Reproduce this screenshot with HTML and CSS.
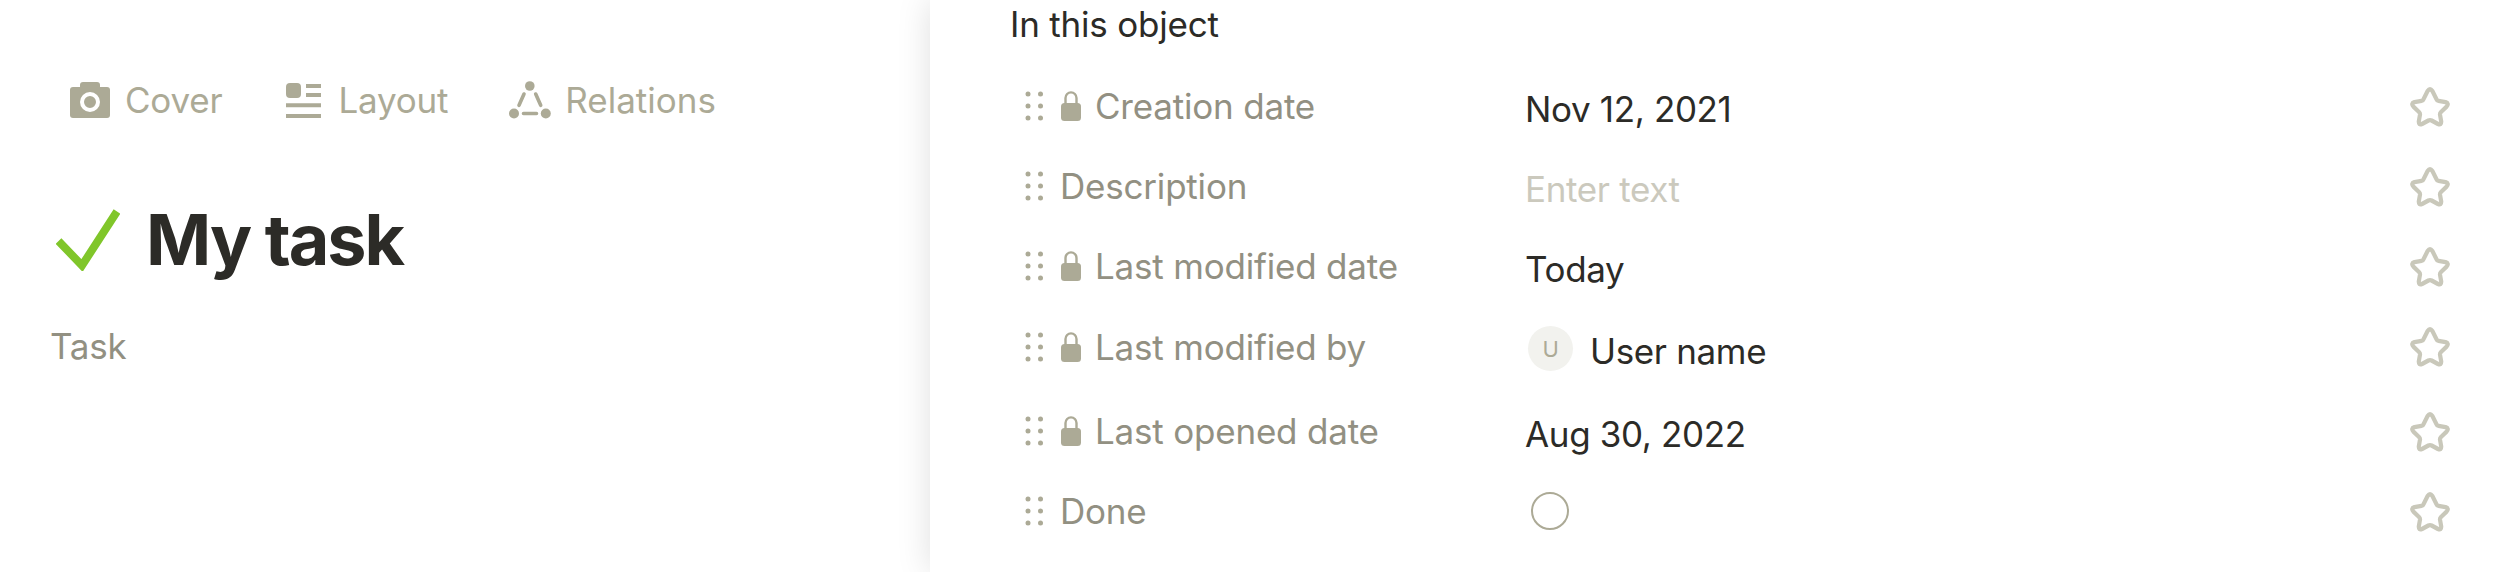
FILE: index.html
```html
<!DOCTYPE html>
<html lang="en">
<head>
<meta charset="utf-8">
<title>My task</title>
<link rel="stylesheet" href="styles.css">
</head>
<body>
<main class="page">
  <section class="object">
    <div class="toolbar">
      <div class="tool tool-cover">
        <svg class="ico-cover" viewBox="0 0 40 36"><rect x="10" y="0" width="20" height="10" rx="3" fill="#acaa96"/><rect x="0" y="5" width="40" height="31" rx="3" fill="#acaa96"/><circle cx="20" cy="20" r="8" fill="#acaa96" stroke="#fff" stroke-width="4"/></svg>
        <span>Cover</span>
      </div>
      <div class="tool tool-layout">
        <svg class="ico-layout" viewBox="0 0 35 35"><rect x="0" y="0" width="15" height="15" rx="4" fill="#acaa96"/><path d="M20 3H35M20 12H35M0 22.2H35M0 33H35" stroke="#acaa96" stroke-width="4" fill="none"/></svg>
        <span>Layout</span>
      </div>
      <div class="tool tool-relations">
        <svg class="ico-rel" viewBox="0 0 42 38"><circle cx="20.8" cy="5" r="4.8" fill="#acaa96"/><circle cx="5" cy="32.5" r="5" fill="#acaa96"/><circle cx="36.8" cy="32.5" r="5" fill="#acaa96"/><path d="M15 13L10 24.3M26.7 13L31.7 24.3M14.5 32.5H27.5" stroke="#acaa96" stroke-width="3.6" stroke-linecap="round" fill="none"/></svg>
        <span>Relations</span>
      </div>
    </div>
    <div class="heading">
      <svg class="ico-check" viewBox="0 0 64 62"><path d="M2.5 32L26 56.5L61 2.5" stroke="#80c62a" stroke-width="8" fill="none" stroke-linejoin="miter"/></svg>
      <h1>My task</h1>
    </div>
    <p class="type">Task</p>
  </section>
  <section class="panel">
    <h2>In this object</h2>
    <div class="rows">
      <div class="row">
        <div class="name"><svg class="grip" viewBox="0 0 18 30"><use href="#dots"/></svg><svg class="lock" viewBox="0 0 20 30"><use href="#lockshape"/></svg><span>Creation date</span></div>
        <div class="value">Nov 12, 2021</div>
        <svg class="star" viewBox="0 0 40 40"><use href="#starshape"/></svg>
      </div>
      <div class="row">
        <div class="name"><svg class="grip" viewBox="0 0 18 30"><use href="#dots"/></svg><span>Description</span></div>
        <div class="value placeholder">Enter text</div>
        <svg class="star" viewBox="0 0 40 40"><use href="#starshape"/></svg>
      </div>
      <div class="row">
        <div class="name"><svg class="grip" viewBox="0 0 18 30"><use href="#dots"/></svg><svg class="lock" viewBox="0 0 20 30"><use href="#lockshape"/></svg><span>Last modified date</span></div>
        <div class="value">Today</div>
        <svg class="star" viewBox="0 0 40 40"><use href="#starshape"/></svg>
      </div>
      <div class="row row-user">
        <div class="name name-user"><svg class="grip" viewBox="0 0 18 30"><use href="#dots"/></svg><svg class="lock" viewBox="0 0 20 30"><use href="#lockshape"/></svg><span>Last modified by</span></div>
        <div class="value user"><span class="avatar">U</span><span>User name</span></div>
        <svg class="star star-user" viewBox="0 0 40 40"><use href="#starshape"/></svg>
      </div>
      <div class="row">
        <div class="name"><svg class="grip" viewBox="0 0 18 30"><use href="#dots"/></svg><svg class="lock" viewBox="0 0 20 30"><use href="#lockshape"/></svg><span>Last opened date</span></div>
        <div class="value">Aug 30, 2022</div>
        <svg class="star" viewBox="0 0 40 40"><use href="#starshape"/></svg>
      </div>
      <div class="row">
        <div class="name"><svg class="grip" viewBox="0 0 18 30"><use href="#dots"/></svg><span>Done</span></div>
        <div class="value"><span class="checkbox"></span></div>
        <svg class="star" viewBox="0 0 40 40"><use href="#starshape"/></svg>
      </div>
    </div>
  </section>
</main>
<svg class="defs" width="0" height="0" aria-hidden="true">
  <defs>
    <g id="dots" fill="#acaa96"><circle cx="3" cy="3" r="2.5"/><circle cx="15.5" cy="3" r="2.5"/><circle cx="3" cy="15" r="2.5"/><circle cx="15.5" cy="15" r="2.5"/><circle cx="3" cy="27" r="2.5"/><circle cx="15.5" cy="27" r="2.5"/></g>
    <g id="lockshape"><path d="M4.5 14V6.9a5.5 5.5 0 0 1 11 0V14" stroke="#acaa96" stroke-width="2.4" fill="none"/><rect x="0" y="12" width="20" height="18" rx="3.5" fill="#acaa96"/></g>
    <path id="starshape" transform="translate(0 -0.4) scale(1 1.04)" d="M17.6 4.2Q20 0.8 22.4 4.2L26.5 12.2Q27 13.6 28.5 13.8L35.6 15Q39.4 16.2 36.6 19.2L31 24.4Q29.8 25.6 30 27L31.2 33.4Q31.4 37.4 28 36L21.6 32.6Q20 31.8 18.4 32.6L12 36Q8.6 37.4 8.8 33.4L10 27Q10.2 25.6 9 24.4L3.4 19.2Q0.6 16.2 4.4 15L11.5 13.8Q13 13.6 13.5 12.2Z" fill="none" stroke="#c9c8ba" stroke-width="4.2" stroke-linejoin="round"/>
  </defs>
</svg>
</body>
</html>
```
FILE: styles.css
```css
* { box-sizing: border-box; }
html, body { margin: 0; height: 100%; background: #fff; overflow: hidden; }
body { font-family: Inter, "Liberation Sans", sans-serif; font-size: 35px; letter-spacing: -0.2px; color: #2c2b27; }
.page { display: flex; width: 2515px; height: 572px; }
.defs { position: absolute; }

.object { width: 930px; flex: none; padding: 80px 0 0 50px; }
.toolbar { display: flex; align-items: center; height: 40px; padding-left: 20px; color: #acaa96; }
.tool { display: flex; align-items: center; }
.ico-cover { width: 40px; height: 36px; margin-right: 15px; }
.ico-layout { width: 35px; height: 35px; margin-right: 17px; }
.ico-rel { width: 42px; height: 38px; margin-right: 14px; }
.tool-layout { margin-left: 64px; }
.tool-relations { margin-left: 61px; }
.tool-relations span { letter-spacing: 0; }

.heading { display: flex; align-items: center; margin-top: 84px; padding-left: 6px; }
.ico-check { width: 64px; height: 62px; }
h1 { margin: 0 0 0 26px; font-size: 70px; line-height: 72px; font-weight: 700; letter-spacing: -2px; color: #2c2b27; }
.type { margin: 48px 0 0; line-height: 44px; color: #929082; }

.panel { flex: 1; background: #fff; padding: 1px 0 0 80px; box-shadow: 0 0 32px rgba(0,0,0,.13); position: relative; }
h2 { margin: 0; font-size: 35px; font-weight: 400; line-height: 46px; color: #2c2b27; }
.rows { margin-top: 19px; padding-left: 15px; }
.row { display: flex; align-items: center; height: 80px; }
.row-user { height: 85px; }
.name { display: flex; align-items: center; width: 502px; flex: none; color: #929082; }
.name-user { padding-bottom: 4px; }
.grip { width: 18px; height: 30px; margin-right: 18px; flex: none; }
.lock { width: 20px; height: 30px; margin-right: 14px; flex: none; }
.grip + span { margin-left: -1px; }
.value { width: 885px; flex: none; padding: 5px 0 0; margin-left: -2px; letter-spacing: -0.35px; color: #2c2b27; }
.placeholder { color: #cbc9bd; }
.user { display: flex; align-items: center; }
.avatar { width: 45px; height: 45px; border-radius: 50%; background: #f2f2ee; color: #acaa96; font-size: 22px; display: flex; align-items: center; justify-content: center; margin: -5px 17px 0 3px; }
.checkbox { display: block; width: 38px; height: 38px; border: 2px solid #acaa96; border-radius: 50%; margin: -5px 0 0 6px; }
.star { width: 40px; height: 40px; flex: none; margin-top: 2px; }
.star-user { margin-top: -3px; }
```
